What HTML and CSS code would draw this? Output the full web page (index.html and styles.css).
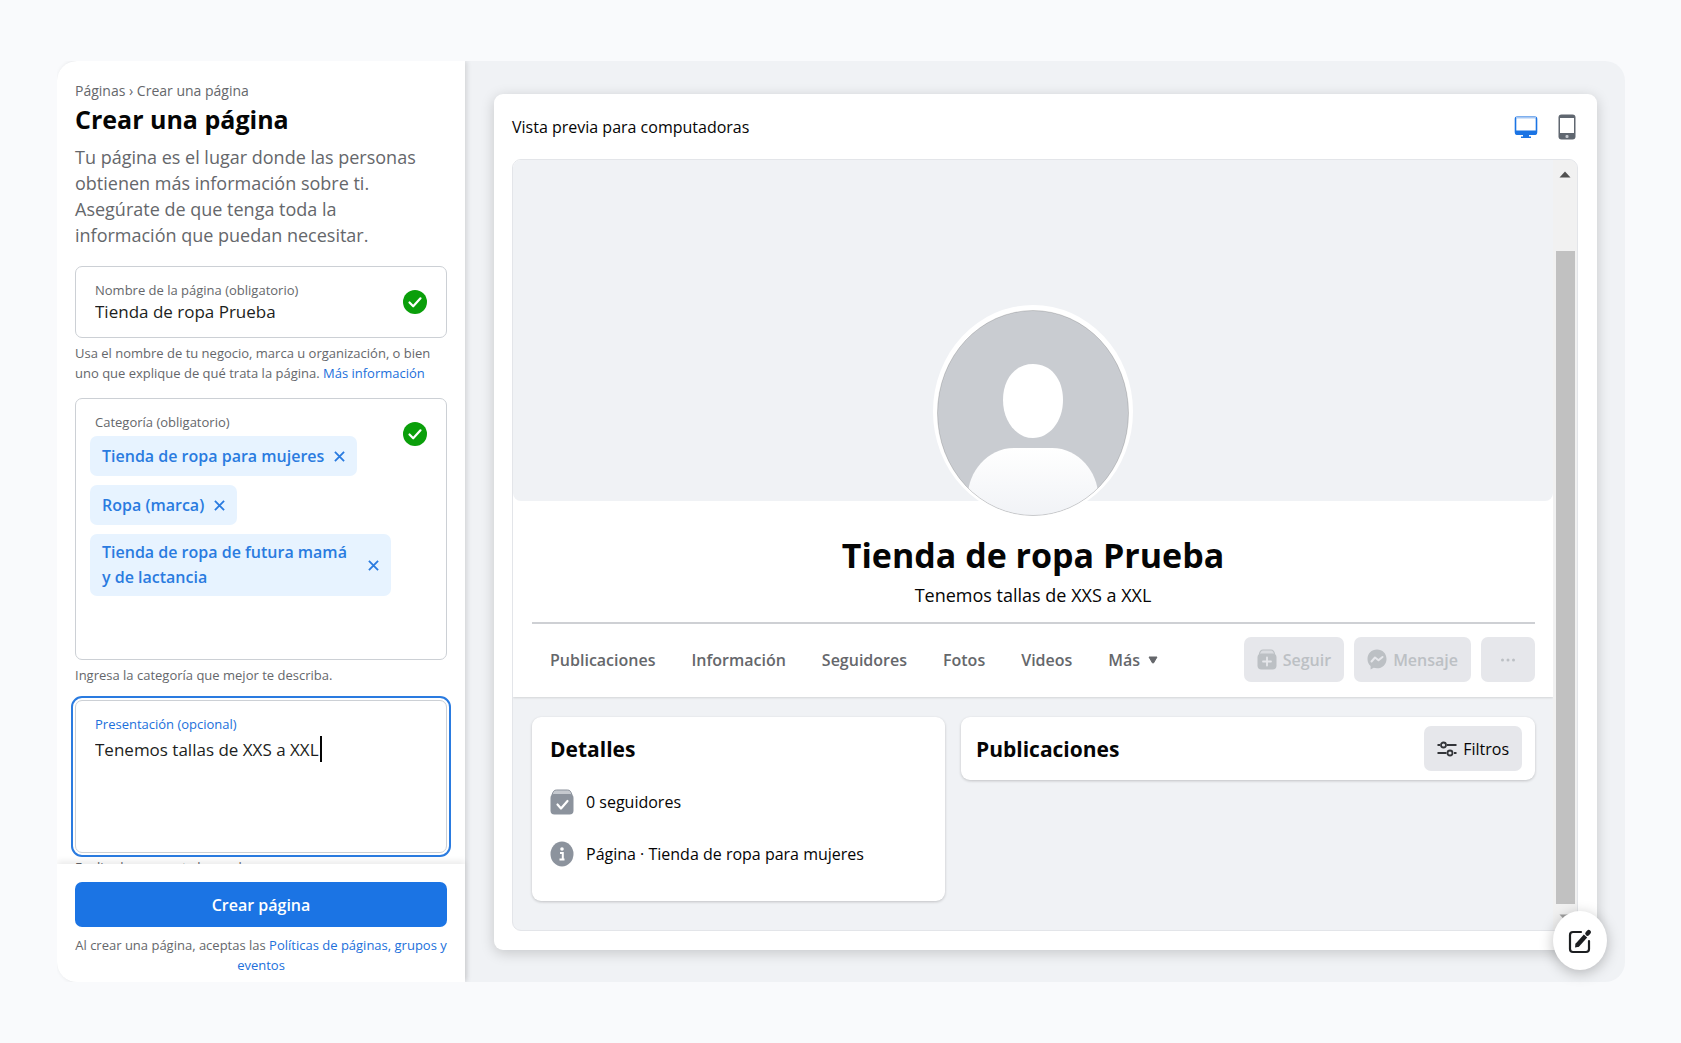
FILE: index.html
```
<!DOCTYPE html>
<html lang="es">
<head>
    <meta charset="utf-8">
    <title>Crear una página</title>
    <link rel="stylesheet" href="styles.css">
</head>
<body>
    <div class="window">
        <aside class="sidebar">
            <form class="form" id="pageForm">
                <nav class="breadcrumb">Páginas › Crear una página</nav>
                <h1>Crear una página</h1>
                <p class="intro">Tu página es el lugar donde las personas obtienen más información sobre ti. Asegúrate de que tenga toda la información que puedan necesitar.</p>

                <div class="field name-field">
                    <div class="field-main">
                        <label for="pageName">Nombre de la página (obligatorio)</label>
                        <input type="text" id="pageName" value="Tienda de ropa Prueba">
                    </div>
                    <svg class="check" viewBox="0 0 24 24"><circle cx="12" cy="12" r="12" fill="#0a9f0a"/><path d="M6.5 12.5l3.7 3.8 7.3-8" fill="none" stroke="#fff" stroke-width="2.2" stroke-linecap="round" stroke-linejoin="round"/></svg>
                </div>
                <p class="help">Usa el nombre de tu negocio, marca u organización, o bien uno que explique de qué trata la página. <a href="#">Más información</a></p>

                <div class="field category-field">
                    <div class="field-main">
                        <span class="field-label">Categoría (obligatorio)</span>
                        <div class="chips">
                            <div class="chip">Tienda de ropa para mujeres
                                <button type="button" aria-label="Quitar"><svg viewBox="0 0 12 12"><path d="M1 1l10 10M11 1L1 11"/></svg></button>
                            </div>
                            <div class="chip">Ropa (marca)
                                <button type="button" aria-label="Quitar"><svg viewBox="0 0 12 12"><path d="M1 1l10 10M11 1L1 11"/></svg></button>
                            </div>
                            <div class="chip chip-long"><span>Tienda de ropa de futura mamá<br>y de lactancia</span>
                                <button type="button" aria-label="Quitar"><svg viewBox="0 0 12 12"><path d="M1 1l10 10M11 1L1 11"/></svg></button>
                            </div>
                        </div>
                    </div>
                    <svg class="check" viewBox="0 0 24 24"><circle cx="12" cy="12" r="12" fill="#0a9f0a"/><path d="M6.5 12.5l3.7 3.8 7.3-8" fill="none" stroke="#fff" stroke-width="2.2" stroke-linecap="round" stroke-linejoin="round"/></svg>
                </div>
                <p class="help">Ingresa la categoría que mejor te describa.</p>

                <div class="field bio-field">
                    <div class="field-main">
                        <label for="bio">Presentación (opcional)</label>
                        <textarea id="bio">Tenemos tallas de XXS a XXL</textarea>
                        <span class="caret"></span>
                    </div>
                </div>
                <p class="help">Explica brevemente lo que haces.</p>
            </form>
            <footer class="footer">
                <button type="submit" form="pageForm" class="create">Crear página</button>
                <p class="legal">Al crear una página, aceptas las <a href="#">Políticas de páginas, grupos y eventos</a></p>
            </footer>
        </aside>

        <main class="stage">
            <section class="preview">
                <header class="preview-head">
                    <h2>Vista previa para computadoras</h2>
                    <button type="button" class="device" aria-label="Computadora">
                        <svg width="24" height="24" viewBox="0 0 24 24"><rect x="1.5" y="2" width="21" height="17" rx="2" fill="#fff" stroke="#1b74e4" stroke-width="1.6"/><path d="M2 2.500h20" stroke="#a9c8f2" stroke-width="2"/><path d="M1 15.500h22v2.500a2 2 0 0 1-2 2h-6v1.500h2v1.500H7v-1.500h2V20H3a2 2 0 0 1-2-2z" fill="#1b74e4"/></svg>
                    </button>
                    <button type="button" class="device" aria-label="Celular">
                        <svg width="18" height="26" viewBox="0 0 18 26"><rect x="0.500" y="0.500" width="17" height="25" rx="3" fill="#606770"/><rect x="2" y="4" width="14" height="15" fill="#fff"/><rect x="7.500" y="21" width="3" height="3" rx="1" fill="#c4c8ce"/></svg>
                    </button>
                </header>

                <div class="viewport">
                    <div class="page">
                        <div class="hero">
                            <div class="cover">
                                <svg class="avatar" viewBox="0 0 200 213">
                                    <defs>
                                        <clipPath id="face"><ellipse cx="100" cy="108" rx="95.500" ry="102.500"/></clipPath>
                                        <linearGradient id="shirt" x1="0" y1="0" x2="0" y2="1"><stop offset="0" stop-color="#fff"/><stop offset="1" stop-color="#eff1f5"/></linearGradient>
                                    </defs>
                                    <ellipse cx="100" cy="106.500" rx="100" ry="106.500" fill="#fff"/>
                                    <g clip-path="url(#face)">
                                        <rect width="200" height="213" fill="#c9ccd1"/>
                                        <path d="M100 59c18 0 30 15 30 36 0 22-14 38-30 38s-30-16-30-38c0-21 12-36 30-36z" fill="#fff"/>
                                        <path d="M35 190c0-22 19-47 46-47h38c27 0 46 25 46 47v30H35z" fill="url(#shirt)"/>
                                    </g>
                                    <ellipse cx="100" cy="108" rx="95.500" ry="102.500" fill="none" stroke="#000" stroke-opacity=".15"/>
                                </svg>
                            </div>
                            <h3 class="page-name">Tienda de ropa Prueba</h3>
                            <p class="page-bio">Tenemos tallas de XXS a XXL</p>
                            <div class="toolbar">
                                <nav class="tabs">
                                    <a href="#">Publicaciones</a>
                                    <a href="#">Información</a>
                                    <a href="#">Seguidores</a>
                                    <a href="#">Fotos</a>
                                    <a href="#">Videos</a>
                                    <a href="#">Más <svg width="10" height="8" viewBox="0 0 10 8"><path d="M1 1h8L5.500 7h-1z" fill="#65676b" stroke="#65676b" stroke-linejoin="round"/></svg></a>
                                </nav>
                                <div class="actions">
                                    <button type="button" disabled>
                                        <svg width="20" height="21" viewBox="0 0 20 21"><path d="M2.500 5C3 2 4 1 6 1h8c2 0 3 1 3.500 4" fill="#dadce0" stroke="#bcc0c4" stroke-width="1.200"/><rect x="0.500" y="4.500" width="19" height="16" rx="4" fill="#bcc0c4"/><path d="M10 8.500v8M6 12.500h8" stroke="#e6e7eb" stroke-width="1.800" stroke-linecap="round"/></svg>
                                        Seguir
                                    </button>
                                    <button type="button" disabled>
                                        <svg width="20" height="21" viewBox="0 0 20 21"><path d="M10 0.500C4.500 0.500 0.500 4.500 0.500 10c0 3 1.200 5.400 3.100 7v3.400l3.100-1.600c1 .3 2.100.5 3.300.5 5.500 0 9.500-4 9.500-9.400S15.500 0.500 10 0.500z" fill="#bcc0c4"/><path d="M4.500 12.500l3.500-4 3.500 2.800 4-3.300" fill="none" stroke="#e6e7eb" stroke-width="2" stroke-linecap="round" stroke-linejoin="round"/></svg>
                                        Mensaje
                                    </button>
                                    <button type="button" class="more" aria-label="Más opciones" disabled>
                                        <svg width="16" height="4" viewBox="0 0 16 4"><g fill="#bcc0c4"><circle cx="2.500" cy="2" r="1.500"/><circle cx="8" cy="2" r="1.500"/><circle cx="13.500" cy="2" r="1.500"/></g></svg>
                                    </button>
                                </div>
                            </div>
                        </div>

                        <div class="columns">
                            <section class="card details">
                                <h4>Detalles</h4>
                                <div class="detail">
                                    <svg width="24" height="26" viewBox="0 0 24 26"><path d="M2 6C3 2.500 4 1 6.500 1h11C20 1 21 2.500 22 6z" fill="#c5c9cf" stroke="#8c939d" stroke-width="1"/><rect x="0.500" y="5" width="23" height="20.500" rx="4" fill="#8c939d"/><path d="M7.500 15.500l3.500 4 6.500-7.500" fill="none" stroke="#fff" stroke-width="2.200" stroke-linecap="round" stroke-linejoin="round"/></svg>
                                    <span>0 seguidores</span>
                                </div>
                                <div class="detail">
                                    <svg width="24" height="26" viewBox="0 0 24 26"><ellipse cx="12" cy="13" rx="11.500" ry="12.500" fill="#8c939d"/><circle cx="12" cy="8" r="1.800" fill="#fff"/><path d="M10 12h2.800v6.500M9.500 18.500h5" fill="none" stroke="#fff" stroke-width="2"/></svg>
                                    <span><b>Página</b> · Tienda de ropa para mujeres</span>
                                </div>
                            </section>
                            <section class="card posts">
                                <h4>Publicaciones</h4>
                                <button type="button" class="filters">
                                    <svg width="20" height="16" viewBox="0 0 20 16"><g fill="none" stroke="#333539" stroke-width="1.800"><path d="M0.500 4h2.500M10 4h9.500M0.500 12h9M17 12h2.500"/><circle cx="6.500" cy="4" r="2.500"/><circle cx="13" cy="12" r="2.500"/></g></svg>
                                    Filtros
                                </button>
                            </section>
                        </div>
                    </div>
                    <div class="scrollbar">
                        <svg width="12" height="7" viewBox="0 0 12 7"><path d="M0.500 6.500L6 0.500l5.500 6z" fill="#505050"/></svg>
                        <div class="thumb"></div>
                        <svg width="12" height="7" viewBox="0 0 12 7"><path d="M0.500 0.500L6 6.500l5.500-6z" fill="#a0a0a0"/></svg>
                    </div>
                </div>
            </section>
            <button type="button" class="compose" aria-label="Editar">
                <svg width="24" height="26" viewBox="0 0 24 26"><path d="M13 4H5C3 4 2 5 2 7v14c0 2 1 3 3 3h13c2 0 3-1 3-3v-8" fill="none" stroke="#1c1e21" stroke-width="2.200" stroke-linecap="round"/><path d="M9 17.500l8.500-9.500" stroke="#1c1e21" stroke-width="4.500"/><path d="M7 19.500l.5-4 3.500 3.200z" fill="#1c1e21"/><path d="M19.500 5.500l1.200-1.300" stroke="#1c1e21" stroke-width="4.500" stroke-linecap="round"/></svg>
            </button>
        </main>
    </div>
</body>
</html>
```
FILE: styles.css
```
* {
    box-sizing: border-box;
}

body {
    margin: 0;
    min-height: 100vh;
    padding: 61px 56px 61px 57px;
    display: flex;
    background: #f9fafc;
    font-family: "Open Sans", "Noto Sans", sans-serif;
    color: #050505;
}

h1, h2, h3, h4, p {
    margin: 0;
}

button, input, textarea {
    font-family: inherit;
    border: 0;
    padding: 0;
    background: none;
}

a {
    color: #216fdb;
    text-decoration: none;
}

svg {
    display: block;
    flex: none;
}

.window {
    flex: 1;
    display: flex;
    position: relative;
    border-radius: 20px;
    background: #f0f2f5;
}

/* left side */
.sidebar {
    flex: none;
    width: 408px;
    display: flex;
    flex-direction: column;
    background: #fff;
    border-radius: 20px 0 0 20px;
    box-shadow: 2px 0 5px rgba(0, 0, 0, 0.12);
    clip-path: inset(0 -10px 0 0);
}

.form {
    flex: 1 1 0;
    min-height: 0;
    overflow: hidden;
    padding: 20px 18px 0;
}

.breadcrumb {
    font-size: 14px;
    line-height: 20px;
    color: #65676b;
}

h1 {
    font-size: 25px;
    line-height: 36px;
    font-weight: 700;
}

.intro {
    margin-top: 7px;
    padding-right: 20px;
    font-size: 18px;
    line-height: 26px;
    color: #65676b;
}

.field {
    position: relative;
    display: flex;
    border: 1px solid #ccd0d5;
    border-radius: 7px;
    padding: 13px 19px;
}

.field-main {
    flex: 1;
    min-width: 0;
}

.field label,
.field-label {
    display: block;
    font-size: 13px;
    line-height: 20px;
    color: #65676b;
}

.field input,
.field textarea {
    display: block;
    width: 100%;
    font-size: 17px;
    line-height: 24px;
    color: #1c1e21;
    outline: none;
    resize: none;
}

.name-field {
    margin-top: 18px;
    height: 72px;
    align-items: center;
}

.check {
    width: 24px;
    height: 24px;
}

.help {
    margin-top: 5px;
    font-size: 13px;
    line-height: 20px;
    color: #65676b;
}

.category-field {
    margin-top: 15px;
    height: 262px;
}

.category-field .check {
    margin-top: 10px;
}

.chips {
    display: flex;
    flex-direction: column;
    align-items: flex-start;
    gap: 9px;
    margin: 4px 0 0 -5px;
}

.chip {
    display: flex;
    align-items: center;
    gap: 10px;
    min-height: 40px;
    padding: 0 12px;
    border-radius: 7px;
    background: #e7f3ff;
    color: #2a7be0;
    font-size: 16px;
    line-height: 25px;
    font-weight: 600;
    white-space: nowrap;
}

.chip-long {
    padding: 6px 12px;
    gap: 21px;
}

.chip svg {
    width: 11px;
    height: 11px;
    fill: none;
    stroke: #2a7be0;
    stroke-width: 2;
}

.bio-field {
    margin-top: 15px;
    height: 153px;
    outline: 2px solid #2a7be0;
    outline-offset: 2px;
}

.bio-field label {
    color: #216fdb;
}

.field textarea {
    margin-top: 4px;
    height: 90px;
}

.caret {
    position: absolute;
    left: 244px;
    top: 35px;
    width: 2px;
    height: 26px;
    background: #050505;
}

.bio-field + .help {
    margin-top: 4px;
}

.footer {
    position: relative;
    padding: 18px 18px 7px;
    box-shadow: 0 -3px 6px rgba(0, 0, 0, 0.08);
    text-align: center;
}

.create {
    width: 100%;
    height: 45px;
    border-radius: 7px;
    background: #1b74e4;
    color: #fff;
    font-size: 16px;
    font-weight: 600;
}

.legal {
    margin: 8px -8px 0;
    font-size: 13px;
    line-height: 20px;
    color: #65676b;
}

/* right side */
.stage {
    flex: 1;
    min-width: 0;
    display: flex;
    padding: 33px 28px 32px 29px;
}

.preview {
    flex: 1;
    min-width: 0;
    display: flex;
    flex-direction: column;
    padding: 0 19px 19px 18px;
    border-radius: 9px;
    background: #fff;
    box-shadow: 0 3px 14px rgba(0, 0, 0, 0.18);
}

.preview-head {
    display: flex;
    align-items: center;
    gap: 20px;
    height: 65px;
    padding-right: 2px;
}

.preview-head h2 {
    flex: 1;
    font-size: 16px;
    font-weight: 500;
    line-height: 24px;
}

.viewport {
    flex: 1;
    display: flex;
    border: 1px solid #e3e5e9;
    border-radius: 9px;
    overflow: hidden;
    background: #f0f2f5;
}

.page {
    flex: 1;
    min-width: 0;
}

.hero {
    padding-bottom: 15px;
    background: #fff;
    box-shadow: 0 1px 2px rgba(0, 0, 0, 0.12);
}

.cover {
    display: flex;
    justify-content: center;
    align-items: flex-end;
    height: 341px;
    border-radius: 0 0 8px 8px;
    background: #f0f2f5;
}

.avatar {
    width: 200px;
    height: 213px;
    margin-bottom: -17px;
}

.page-name {
    margin-top: 28px;
    font-size: 34px;
    line-height: 52px;
    text-align: center;
}

.page-bio {
    font-size: 18px;
    line-height: 28px;
    text-align: center;
}

.toolbar {
    display: flex;
    align-items: center;
    justify-content: space-between;
    margin: 13px 18px 0 19px;
    padding: 13px 0 0 18px;
    border-top: 2px solid #ced0d4;
}

.tabs {
    display: flex;
    gap: 36px;
}

.tabs a {
    display: flex;
    align-items: center;
    gap: 8px;
    color: #65676b;
    font-size: 16px;
    font-weight: 600;
}

.actions {
    display: flex;
    gap: 10px;
}

.actions button,
.filters {
    display: flex;
    align-items: center;
    gap: 6px;
    height: 45px;
    padding: 0 13px;
    border-radius: 7px;
    background: #e6e7eb;
    color: #bcc0c4;
    font-size: 16px;
    font-weight: 600;
}

.actions .more {
    width: 54px;
    justify-content: center;
}

.columns {
    display: grid;
    grid-template-columns: 413fr 574fr;
    align-items: start;
    gap: 16px;
    padding: 20px 18px 0 19px;
}

.card {
    border-radius: 9px;
    background: #fff;
    box-shadow: 0 1px 3px rgba(0, 0, 0, 0.2);
}

.card h4 {
    font-size: 21px;
    line-height: 28px;
}

.details {
    min-height: 184px;
    padding: 18px;
}

.detail {
    display: flex;
    align-items: center;
    gap: 12px;
    height: 26px;
    margin-top: 26px;
    font-size: 16px;
}

.detail b {
    font-weight: 500;
}

.posts {
    display: flex;
    align-items: center;
    justify-content: space-between;
    height: 63px;
    padding: 0 13px 0 15px;
}

.actions + .filters,
.filters {
    color: #050505;
    font-weight: 500;
}

.scrollbar {
    flex: none;
    width: 24px;
    display: flex;
    flex-direction: column;
    align-items: center;
    padding: 11px 0 9px;
    background: #f1f1f1;
}

.thumb {
    flex: 1;
    width: 19px;
    margin: 73px 0 10px;
    background: #c1c1c1;
}

.compose {
    position: absolute;
    right: 18px;
    bottom: 12px;
    width: 54px;
    height: 59px;
    display: flex;
    align-items: center;
    justify-content: center;
    border-radius: 50%;
    background: #fff;
    box-shadow: 0 3px 14px rgba(0, 0, 0, 0.25);
}
```
